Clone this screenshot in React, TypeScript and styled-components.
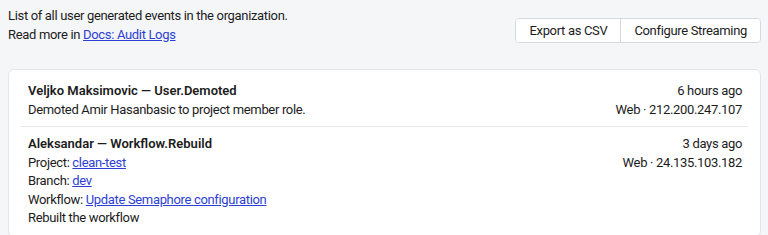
import React from "react";
import styled, { createGlobalStyle } from "styled-components";

const GlobalStyle = createGlobalStyle`
  html, body {
    margin: 0;
    padding: 0;
    background: #f5f6f8;
  }
  body {
    font-family: Roboto, "Noto Sans", sans-serif;
    font-size: 13px;
    line-height: 18.5px;
    letter-spacing: -0.33px;
    color: #1c1c1c;
  }
`;

type AuditEvent = {
  user: string;
  action: string;
  time: string;
  origin: string;
  ip: string;
  lines: React.ReactNode[];
};

const getEvents = (): AuditEvent[] => [
  {
    user: "Veljko Maksimovic",
    action: "User.Demoted",
    time: "6 hours ago",
    origin: "Web",
    ip: "212.200.247.107",
    lines: ["Demoted Amir Hasanbasic to project member role."],
  },
  {
    user: "Aleksandar",
    action: "Workflow.Rebuild",
    time: "3 days ago",
    origin: "Web",
    ip: "24.135.103.182",
    lines: [
      <>
        Project: <Link href="#">clean-test</Link>
      </>,
      <>
        Branch: <Link href="#">dev</Link>
      </>,
      <>
        Workflow: <Link href="#">Update Semaphore configuration</Link>
      </>,
      "Rebuilt the workflow",
    ],
  },
];

function App() {
  const events = getEvents();

  return (
    <>
      <GlobalStyle />
      <StyledPage>
        <StyledHeader>
          <StyledIntro>
            List of all user generated events in the organization.
            <br />
            Read more in <Link href="#">Docs: Audit Logs</Link>
          </StyledIntro>
          <StyledButtonGroup>
            <StyledButton type="button">Export as CSV</StyledButton>
            <StyledButton type="button">Configure Streaming</StyledButton>
          </StyledButtonGroup>
        </StyledHeader>
        <StyledCard>
          {events.map((event) => (
            <StyledRow key={event.user + event.action}>
              <div>
                <StyledTitle>
                  {event.user} — {event.action}
                </StyledTitle>
                {event.lines.map((line, i) => (
                  <div key={i}>{line}</div>
                ))}
              </div>
              <StyledMeta>
                <div>{event.time}</div>
                <div>
                  {event.origin} · {event.ip}
                </div>
              </StyledMeta>
            </StyledRow>
          ))}
        </StyledCard>
      </StyledPage>
    </>
  );
}

export default App;

const StyledPage = styled.main`
  padding: 7px 7px 0 8px;
`;

const StyledHeader = styled.header`
  display: flex;
  justify-content: space-between;
  align-items: flex-start;
`;

const StyledIntro = styled.p`
  margin: 0;
`;

const Link = styled.a`
  color: #2d3fd3;
  text-decoration: underline;
`;

const StyledButtonGroup = styled.div`
  display: flex;
  margin-top: 11px;

  border: 1px solid #d5d8dc;
  border-radius: 4px;
  background: #ffffff;
  overflow: hidden;
`;

const StyledButton = styled.button`
  height: 23px;
  padding: 0 13px;

  font-family: inherit;
  font-size: 13px;
  letter-spacing: inherit;
  color: #1c1c1c;
  background: #ffffff;

  border: none;
  cursor: pointer;

  & + & {
    border-left: 1px solid #d5d8dc;
  }
`;

const StyledCard = styled.section`
  margin-top: 25px;
  padding: 4px 12px 0;

  background: #ffffff;
  border: 1px solid #e3e5e8;
  border-radius: 6px;
`;

const StyledRow = styled.article`
  display: flex;
  justify-content: space-between;
  padding: 8px 6px 7px 7px;

  border-bottom: 1px solid #e6e8eb;
`;

const StyledTitle = styled.div`
  font-weight: 600;
  letter-spacing: 0;
`;

const StyledMeta = styled.div`
  text-align: right;
`;
